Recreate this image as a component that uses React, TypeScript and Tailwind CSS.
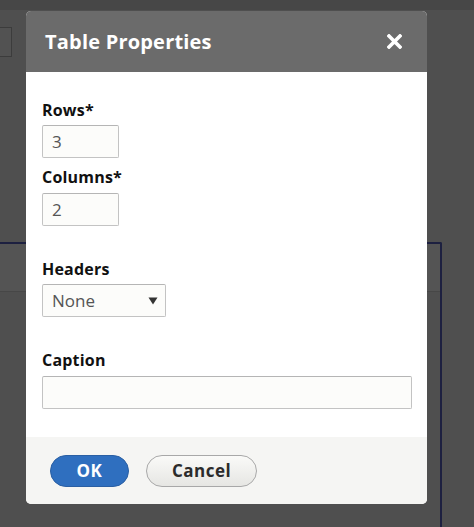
import React from "react";

const font = { fontFamily: '"Open Sans", "DejaVu Sans", sans-serif' };

function Label({ children }: { children: React.ReactNode }) {
  return (
    <div className="text-[16px] leading-[20px] font-bold text-[#111] tracking-[0.2px]">{children}</div>
  );
}

function TextBox({ value, width }: { value: string; width: string }) {
  return (
    <div
      className={`${width} h-[33px] border border-[#c3c3c3] border-t-[#b5b5b5] rounded-[2px] bg-[#fcfcfa] flex items-center pl-[9px] text-[17px] text-[#555]`}
    >
      {value}
    </div>
  );
}

export default function App() {
  return (
    <div className="relative w-[474px] h-[527px] bg-[#4f4f4f] overflow-hidden" style={font}>
      {/* background page (behind overlay) */}
      <div className="h-[10px] bg-[#474747]" />
      <div className="mt-[17px] w-[12px] h-[30px] border border-[#3c3c3c] border-l-0 bg-[#525252]" />
      <div className="mt-[185px] w-[442px] h-[300px] border-t-2 border-r-2 border-[#1d2040] rounded-tr-[2px] bg-[#545454]">
        <div className="h-[48px] border-b border-[#474747]" />
        <div className="bg-[#4f4f4f] h-full" />
      </div>

      {/* dialog */}
      <div className="absolute left-[26px] top-[11px] w-[401px] h-[493px] rounded-[5px] overflow-hidden bg-white flex flex-col">
        <div className="h-[61px] bg-[#6b6b6b] flex items-center justify-between pl-[19px] pr-[25px] shrink-0">
          <div className="text-[20px] font-bold text-white tracking-[0.2px]">Table Properties</div>
          <svg width="15" height="15" viewBox="0 0 15 15">
            <path d="M2 2 L13 13 M13 2 L2 13" stroke="#fff" strokeWidth="3.6" strokeLinecap="square" />
          </svg>
        </div>
        <div className="flex-1 pl-[16px] pr-[15px] pt-[28px]">
          <Label>Rows*</Label>
          <div className="mt-[5px]">
            <TextBox value="3" width="w-[77px]" />
          </div>
          <div className="mt-[9px]">
            <Label>Columns*</Label>
          </div>
          <div className="mt-[6px]">
            <TextBox value="2" width="w-[77px]" />
          </div>
          <div className="mt-[33px]">
            <Label>Headers</Label>
          </div>
          <div className="mt-[5px] w-[124px] h-[33px] border border-[#c3c3c3] border-t-[#b5b5b5] rounded-[2px] bg-[#fcfcfa] flex items-center justify-between pl-[9px] pr-[7px] text-[17px] text-[#555]">
            <span>None</span>
            <svg width="10" height="8" viewBox="0 0 10 8">
              <path d="M0.5 0.5 H9.5 L5 7.5 Z" fill="#333" />
            </svg>
          </div>
          <div className="mt-[33px]">
            <Label>Caption</Label>
          </div>
          <div className="mt-[6px]">
            <TextBox value="" width="w-[370px]" />
          </div>
        </div>
        <div className="h-[67px] bg-[#f5f5f3] shrink-0 flex items-start pt-[18px] pl-[24px] gap-[17px]">
          <div className="w-[79px] h-[32px] rounded-full bg-[#2f6fbf] border border-[#2a5fa3] flex items-center justify-center text-white font-bold text-[17px] tracking-[0.5px]">
            OK
          </div>
          <div className="w-[111px] h-[32px] rounded-full bg-gradient-to-b from-[#fafaf8] to-[#e6e6e3] border border-[#a8a8a8] flex items-center justify-center text-[#2b2b2b] font-bold text-[17px] tracking-[0.5px]">
            Cancel
          </div>
        </div>
      </div>
    </div>
  );
}
